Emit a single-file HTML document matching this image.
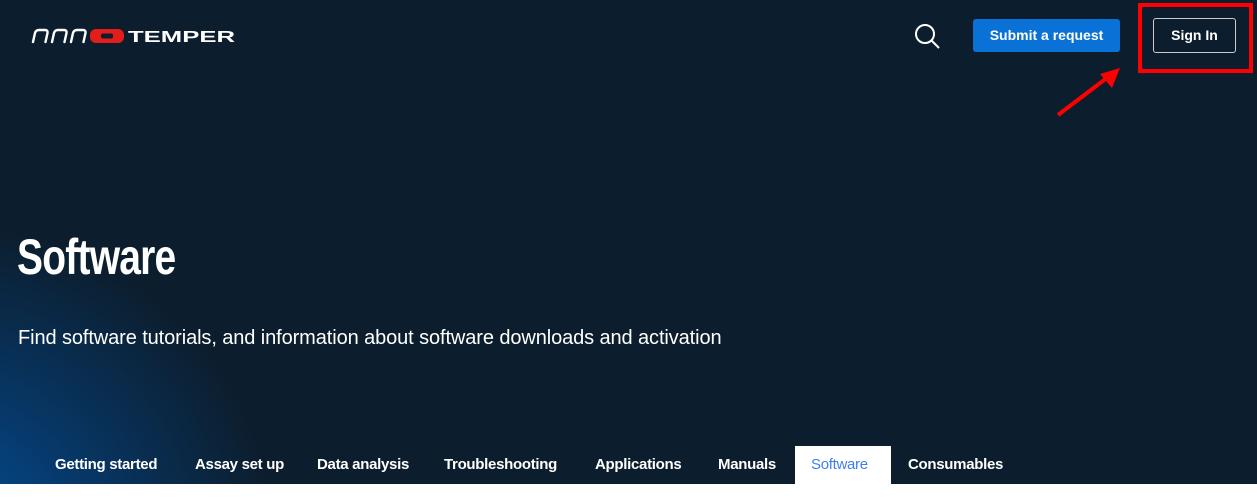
<!DOCTYPE html>
<html><head><meta charset="utf-8"><style>
*{margin:0;padding:0;box-sizing:border-box}
html,body{width:1257px;height:504px;overflow:hidden}
body{background:#fff;font-family:"Liberation Sans",sans-serif;position:relative}
.hero{position:absolute;left:0;top:0;width:1257px;height:484px;background:#0c1e2e;overflow:hidden}
.glow{position:absolute;left:-380px;top:180px;width:700px;height:600px;background:radial-gradient(ellipse at 45% 60%,rgba(3,80,155,1) 0%,rgba(5,65,125,.7) 30%,rgba(12,30,46,0) 62%)}
.t{position:absolute;color:#fff;white-space:nowrap}
.nav{position:absolute;top:456px;font-size:15px;font-weight:bold;color:#fff;letter-spacing:-0.3px}
</style></head><body>
<div class="hero"><div class="glow"></div></div>
<svg style="position:absolute;left:30px;top:26px" width="210" height="20" viewBox="0 0 210 20">
<g fill="none" stroke="#fff" stroke-width="2.4" stroke-linecap="round">
<path d="M3 16 L5 7 Q6 4 9 4 L15 4 Q18 4 17.5 7 L15.5 16"/>
<path d="M22 16 L24 7 Q25 4 28 4 L34 4 Q37 4 36.5 7 L34.5 16"/>
<path d="M41 16 L43 7 Q44 4 47 4 L53 4 Q56 4 55.5 7 L53.5 16"/>
</g>
<rect x="60" y="3" width="34" height="14" rx="6" fill="#e31d1a"/><rect x="71" y="7.5" width="12" height="5" rx="2" fill="#0c1e2e"/>
<text x="98" y="16" fill="#fff" font-family="Liberation Sans" font-size="16" font-weight="bold" textLength="107" lengthAdjust="spacingAndGlyphs">TEMPER</text>
</svg>
<svg style="position:absolute;left:913px;top:22px" width="28" height="28"><circle cx="12" cy="12" r="9" fill="none" stroke="#fff" stroke-width="2"/><path d="M18.5 18.5 L26 26" stroke="#fff" stroke-width="2"/></svg>
<div style="position:absolute;left:973px;top:19px;width:147px;height:33px;background:#0a72d6;border-radius:3px;color:#fff;font-weight:bold;font-size:14px;text-align:center;line-height:33px">Submit a request</div>
<div style="position:absolute;left:1153px;top:18px;width:83px;height:35px;border:1.5px solid #ccc;border-radius:3px;color:#fff;font-weight:bold;font-size:14px;text-align:center;line-height:32px">Sign In</div>
<div style="position:absolute;left:1138px;top:3px;width:115px;height:70px;border:4px solid #f00"></div>
<svg style="position:absolute;left:1050px;top:60px" width="80" height="60"><path d="M8 55 L62 14" stroke="#f00" stroke-width="4"/><polygon points="70,8 50,14 62,28" fill="#f00"/></svg>
<div class="t" style="left:17px;top:228px;font-size:50px;font-weight:bold;letter-spacing:-1px;transform:scaleX(.78);transform-origin:left">Software</div>
<div class="t" style="left:18px;top:327px;font-size:20px;letter-spacing:-0.1px">Find software tutorials, and information about software downloads and activation</div>
<div style="position:absolute;left:795px;top:446px;width:96px;height:38px;background:#fff"></div>
<div class="nav" style="left:55px">Getting started</div>
<div class="nav" style="left:195px">Assay set up</div>
<div class="nav" style="left:317px">Data analysis</div>
<div class="nav" style="left:444px">Troubleshooting</div>
<div class="nav" style="left:595px">Applications</div>
<div class="nav" style="left:718px">Manuals</div>
<div class="nav" style="left:811px;color:#3f80f0;font-weight:normal">Software</div>
<div class="nav" style="left:908px">Consumables</div>
</body></html>
